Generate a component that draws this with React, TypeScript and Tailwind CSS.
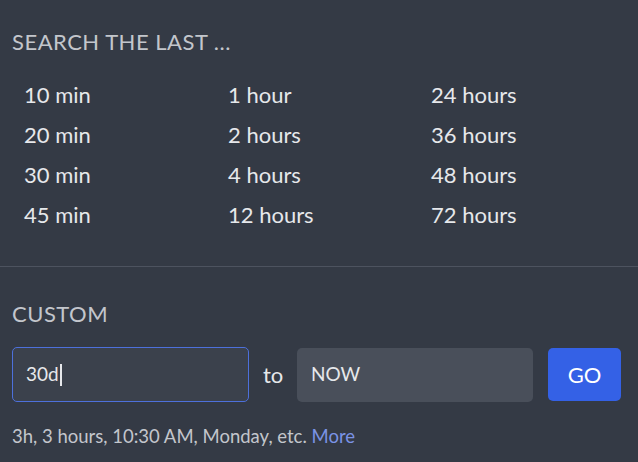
import React from "react";

const ranges = [
  ["10 min", "1 hour", "24 hours"],
  ["20 min", "2 hours", "36 hours"],
  ["30 min", "4 hours", "48 hours"],
  ["45 min", "12 hours", "72 hours"],
];

export default function App() {
  return (
    <div className="h-[462px] w-[638px] overflow-hidden bg-[#343a45] font-['Lato','Noto_Sans',sans-serif] text-[#e6e8eb]">
      <div className="px-3 pt-[27px] pb-[31px]">
        <h2 className="text-[22px] leading-[30px] tracking-[0.5px] text-[#c3c6cc]">SEARCH THE LAST ...</h2>
        <div className="mt-[18px] grid grid-cols-[204px_203px_1fr] pl-3">
          {ranges.flat().map((label) => (
            <button key={label} className="h-10 text-left text-[22px] leading-10 text-[#e6e8eb]">
              {label}
            </button>
          ))}
        </div>
      </div>
      <div className="h-px bg-[#4d535f]" />
      <div className="px-3 pt-[32px]">
        <h2 className="text-[22px] leading-[30px] tracking-[0.5px] text-[#c3c6cc]">CUSTOM</h2>
        <div className="mt-[18px] flex items-center">
          <div className="flex h-[55px] w-[237px] items-center rounded-[5px] border border-[#4d70db] bg-[#3b414c] pl-[13px] text-[19px]">
            30d<span className="ml-px h-[22px] w-[2px] bg-[#e6e8eb]" />
          </div>
          <span className="ml-[14px] w-[21px] text-[22px]">to</span>
          <div className="ml-[13px] flex h-[54px] w-[236px] items-center rounded-[5px] bg-[#494f5a] pl-[14px] text-[19px]">
            NOW
          </div>
          <button className="ml-[15px] h-[53px] w-[73px] rounded-[5px] bg-[#3461e6] text-[22px] text-white">GO</button>
        </div>
        <p className="mt-[22px] text-[18.5px] leading-6 text-[#c3c6cc]">
          3h, 3 hours, 10:30 AM, Monday, etc. <span className="text-[#7b93e6]">More</span>
        </p>
      </div>
    </div>
  );
}
